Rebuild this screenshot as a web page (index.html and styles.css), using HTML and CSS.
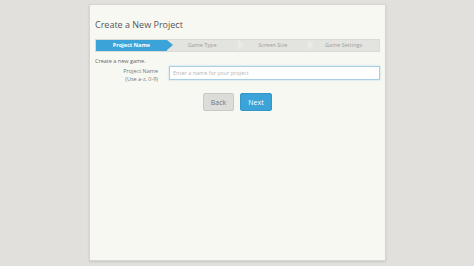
FILE: index.html
```html
<!DOCTYPE html>
<html>
<head>
<meta charset="utf-8">
<link rel="stylesheet" href="styles.css">
</head>
<body>
<div class="panel">
  <h1 class="title">Create a New Project</h1>
  <div class="steps">
    <div class="step active">Project Name</div>
    <div class="step">Game Type</div>
    <div class="step">Screen Size</div>
    <div class="step last">Game Settings</div>
  </div>
  <p class="intro">Create a new game.</p>
  <div class="row">
    <label class="label">Project Name<br>(Use a-z, 0-9)</label>
    <input class="input" type="text" placeholder="Enter a name for your project">
  </div>
  <div class="actions">
    <button class="btn back">Back</button>
    <button class="btn next">Next</button>
  </div>
</div>
</body>
</html>
```
FILE: styles.css
```css
html, body {
  margin: 0;
  padding: 0;
  background: #e2e0dc;
  width: 474px;
  height: 266px;
  overflow: hidden;
  font-family: "Open Sans", "DejaVu Sans", sans-serif;
}
.panel {
  box-sizing: border-box;
  margin: 4px 0 0 89px;
  width: 297px;
  height: 257px;
  background: #f8f8f3;
  border: 1px solid #d8d6d1;
  box-shadow: 0 1px 2px rgba(0,0,0,0.12);
  padding: 13px 5px 0 5px;
}
.title {
  margin: 0;
  font-size: 9px;
  font-weight: normal;
  color: #555;
  line-height: 14px;
}
.steps {
  display: flex;
  margin-top: 7px;
  height: 13px;
  background: #e3e3df;
  border: 1px solid #dadad6;
  box-sizing: border-box;
}
.step {
  flex: 1;
  position: relative;
  font-size: 5.5px;
  line-height: 11px;
  color: #a0a09c;
  text-align: center;
}
.step::after {
  content: "";
  position: absolute;
  right: -6px;
  top: 0;
  width: 0;
  height: 0;
  border-top: 5.5px solid transparent;
  border-bottom: 5.5px solid transparent;
  border-left: 6px solid #eaeae6;
  z-index: 1;
}
.step.last::after { display: none; }
.step.active {
  background: #3ba3d8;
  color: #fff;
  font-weight: bold;
}
.step.active::after {
  border-left-color: #3ba3d8;
  z-index: 2;
}
.intro {
  margin: 5px 0 0 0;
  font-size: 5.5px;
  line-height: 8px;
  color: #666;
}
.row {
  display: grid;
  grid-template-columns: 63px 1fr;
  column-gap: 11px;
  margin-top: 0;
  align-items: start;
}
.label {
  text-align: right;
  font-size: 5.5px;
  line-height: 8px;
  color: #777;
  padding-top: 2px;
}
.input {
  box-sizing: border-box;
  height: 14px;
  margin: 0;
  margin-top: 1px;
  border: 1px solid #a9cfe6;
  background: #fff;
  font-family: inherit;
  font-size: 5.5px;
  padding: 0 3px;
  outline: none;
  box-shadow: 0 0 2px rgba(90,170,220,0.4);
}
.input::placeholder { color: #b5b5b5; }
.actions {
  display: flex;
  justify-content: center;
  gap: 6px;
  margin-top: 10px;
}
.btn {
  box-sizing: border-box;
  width: 31px;
  height: 18px;
  font-family: inherit;
  font-size: 7px;
  border-radius: 2px;
  padding: 0;
}
.back {
  background: #dcdcd8;
  border: 1px solid #c8c8c4;
  color: #777;
}
.next {
  width: 32px;
  background: #3ba3d8;
  border: 1px solid #3596c8;
  color: #fff;
}
```
